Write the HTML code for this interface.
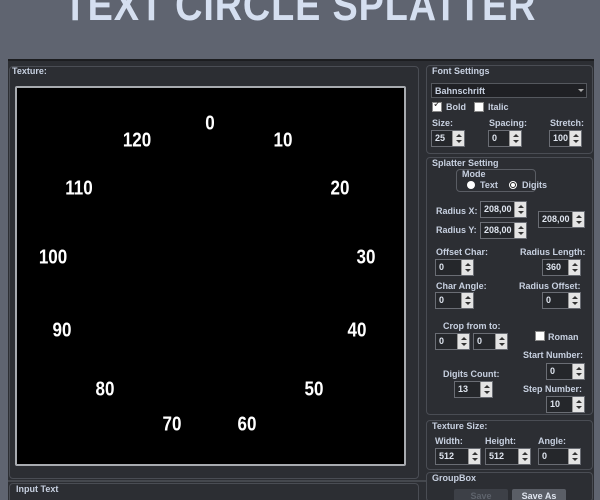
<!DOCTYPE html><html style="overflow:hidden;width:600px;height:500px"><head><style>
*{box-sizing:border-box;margin:0;padding:0}
body{width:600px;height:500px;overflow:hidden;background:#5f6470;font-family:"Liberation Sans",sans-serif;position:relative}
.a{position:absolute}
.title{left:0;width:600px;top:-19px;text-align:center;font:bold 44px "Liberation Sans",sans-serif;color:#d5dff0;letter-spacing:1px;transform:scaleX(0.86)}
.main{left:8px;top:59px;width:586px;height:441px;background:#2c2e33;border-top:2px solid #1c1d20}
.gb{position:absolute;border:1px solid #4a4d54;border-radius:4px}
.lbl{position:absolute;font-size:9px;font-weight:bold;color:#c7d0e0;white-space:nowrap}
.spin{position:absolute;height:17px;background:#25272b;border:1px solid #6a6d74}
.spin span{position:absolute;left:3px;top:2px;font-size:9px;font-weight:bold;color:#dfe5ef}
.spin i{position:absolute;right:0;top:0;width:12px;height:15px;background:#e4e4e4;border-left:1px solid #999}
.spin i:before{content:"";position:absolute;left:3px;top:3px;border:3px solid transparent;border-bottom:3px solid #333;border-top:0}
.spin i:after{content:"";position:absolute;left:3px;top:9px;border:3px solid transparent;border-top:3px solid #333;border-bottom:0}
.n{position:absolute;color:#fff;font:bold 20px "Liberation Sans",sans-serif;transform:translate(-50%,-50%) scaleX(0.85)}
.cb{position:absolute;width:10px;height:10px;background:#fff;border:1px solid #888}
</style></head><body>
<div class="a title">TEXT CIRCLE SPLATTER</div>
<div class="a main"></div>
<div class="gb" style="left:9px;top:66px;width:410px;height:413px"></div>
<div class="lbl" style="left:12px;top:66px">Texture:</div>
<div class="a" style="left:15px;top:86px;width:391px;height:380px;background:#000;border:2px solid #a8abb0;border-radius:2px"></div>
<div class="n" style="left:210px;top:124px">0</div>
<div class="n" style="left:283px;top:141px">10</div>
<div class="n" style="left:340px;top:189px">20</div>
<div class="n" style="left:366px;top:258px">30</div>
<div class="n" style="left:357px;top:331px">40</div>
<div class="n" style="left:314px;top:390px">50</div>
<div class="n" style="left:247px;top:425px">60</div>
<div class="n" style="left:172px;top:425px">70</div>
<div class="n" style="left:105px;top:390px">80</div>
<div class="n" style="left:62px;top:331px">90</div>
<div class="n" style="left:53px;top:258px">100</div>
<div class="n" style="left:79px;top:189px">110</div>
<div class="n" style="left:137px;top:141px">120</div>
<div class="a" style="left:8px;top:480px;width:418px;height:2px;background:#45484e"></div>
<div class="gb" style="left:9px;top:483px;width:410px;height:25px"></div>
<div class="lbl" style="left:16px;top:484px">Input Text</div>

<div class="gb" style="left:426px;top:65px;width:167px;height:89px"></div>
<div class="lbl" style="left:432px;top:66px">Font Settings</div>
<div class="a" style="left:431px;top:83px;width:156px;height:15px;background:#1f2024;border:1px solid #55585e"><span class="lbl" style="left:3px;top:2px">Bahnschrift</span><span class="a" style="right:2px;top:5px;border:3px solid transparent;border-top:3px solid #aaa"></span></div>
<div class="cb" style="left:432px;top:102px"></div><span class="a" style="left:433px;top:99px;font-size:10px;color:#333">✓</span>
<div class="lbl" style="left:446px;top:102px">Bold</div>
<div class="cb" style="left:474px;top:102px"></div>
<div class="lbl" style="left:488px;top:102px">Italic</div>
<div class="lbl" style="left:432px;top:118px">Size:</div>
<div class="lbl" style="left:489px;top:118px">Spacing:</div>
<div class="lbl" style="left:550px;top:118px">Stretch:</div>
<div class="spin" style="left:431px;top:130px;width:34px"><span>25</span><i></i></div>
<div class="spin" style="left:488px;top:130px;width:34px"><span>0</span><i></i></div>
<div class="spin" style="left:549px;top:130px;width:33px"><span>100</span><i></i></div>

<div class="gb" style="left:426px;top:157px;width:167px;height:258px"></div>
<div class="lbl" style="left:432px;top:158px">Splatter Setting</div>
<div class="gb" style="left:456px;top:169px;width:80px;height:23px;border-color:#5a5d64"></div>
<div class="lbl" style="left:462px;top:169px">Mode</div>
<div class="a" style="left:467px;top:181px;width:8px;height:8px;border-radius:50%;background:#fff"></div>
<div class="lbl" style="left:480px;top:180px">Text</div>
<div class="a" style="left:509px;top:181px;width:8px;height:8px;border-radius:50%;background:#fff;border:2px solid #222;outline:1px solid #fff;outline-offset:-1px"></div>
<div class="lbl" style="left:522px;top:180px">Digits</div>
<div class="lbl" style="left:436px;top:206px">Radius X:</div>
<div class="lbl" style="left:436px;top:225px">Radius Y:</div>
<div class="spin" style="left:480px;top:201px;width:47px"><span>208,00</span><i></i></div>
<div class="spin" style="left:480px;top:222px;width:47px"><span>208,00</span><i></i></div>
<div class="spin" style="left:538px;top:211px;width:47px"><span>208,00</span><i></i></div>
<div class="lbl" style="left:436px;top:247px">Offset Char:</div>
<div class="lbl" style="left:520px;top:247px">Radius Length:</div>
<div class="spin" style="left:435px;top:259px;width:39px"><span>0</span><i></i></div>
<div class="spin" style="left:542px;top:259px;width:39px"><span>360</span><i></i></div>
<div class="lbl" style="left:436px;top:281px">Char Angle:</div>
<div class="lbl" style="left:519px;top:281px">Radius Offset:</div>
<div class="spin" style="left:435px;top:292px;width:39px"><span>0</span><i></i></div>
<div class="spin" style="left:542px;top:292px;width:39px"><span>0</span><i></i></div>
<div class="lbl" style="left:443px;top:321px">Crop from to:</div>
<div class="spin" style="left:435px;top:333px;width:35px"><span>0</span><i></i></div>
<div class="spin" style="left:473px;top:333px;width:35px"><span>0</span><i></i></div>
<div class="cb" style="left:535px;top:331px"></div>
<div class="lbl" style="left:548px;top:332px">Roman</div>
<div class="lbl" style="left:523px;top:350px">Start Number:</div>
<div class="spin" style="left:546px;top:363px;width:39px"><span>0</span><i></i></div>
<div class="lbl" style="left:443px;top:369px">Digits Count:</div>
<div class="spin" style="left:454px;top:381px;width:39px"><span>13</span><i></i></div>
<div class="lbl" style="left:523px;top:384px">Step Number:</div>
<div class="spin" style="left:546px;top:396px;width:39px"><span>10</span><i></i></div>

<div class="gb" style="left:426px;top:420px;width:167px;height:50px"></div>
<div class="lbl" style="left:432px;top:421px">Texture Size:</div>
<div class="lbl" style="left:435px;top:436px">Width:</div>
<div class="lbl" style="left:485px;top:436px">Height:</div>
<div class="lbl" style="left:538px;top:436px">Angle:</div>
<div class="spin" style="left:435px;top:448px;width:46px"><span>512</span><i></i></div>
<div class="spin" style="left:485px;top:448px;width:46px"><span>512</span><i></i></div>
<div class="spin" style="left:538px;top:448px;width:43px"><span>0</span><i></i></div>

<div class="gb" style="left:426px;top:472px;width:167px;height:30px"></div>
<div class="lbl" style="left:432px;top:473px">GroupBox</div>
<div class="a" style="left:454px;top:489px;width:54px;height:14px;background:#3d4047;border-radius:2px;font-size:9px;font-weight:bold;color:#5e636c;text-align:center;padding-top:2px">Save</div>
<div class="a" style="left:512px;top:489px;width:54px;height:14px;background:#5a5e66;border-radius:2px;font-size:9px;font-weight:bold;color:#dfe5ef;text-align:center;padding-top:2px">Save As</div>
</body></html>
